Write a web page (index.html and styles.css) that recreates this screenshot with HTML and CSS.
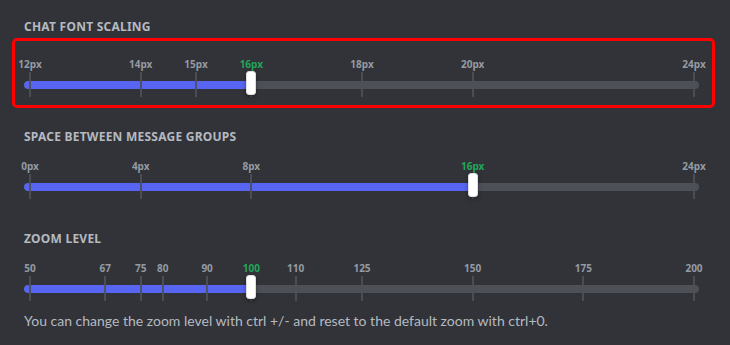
FILE: index.html
```html
<!DOCTYPE html>
<html lang="en">
<head>
<meta charset="utf-8">
<title>Appearance</title>
<link rel="stylesheet" href="styles.css">
</head>
<body>
<main class="page">
  <section class="group group-first">
    <h2 class="title">Chat Font Scaling</h2>
    <div class="slider">
      <div class="track"><div class="fill" style="width:227.3px"></div></div>
      <div class="mark" style="left:6px"><span class="label">12px</span><span class="tick"></span></div>
      <div class="mark" style="left:116.7px"><span class="label">14px</span><span class="tick"></span></div>
      <div class="mark" style="left:172px"><span class="label">15px</span><span class="tick"></span></div>
      <div class="mark" style="left:227.3px"><span class="label active">16px</span><span class="tick"></span></div>
      <div class="mark" style="left:338px"><span class="label">18px</span><span class="tick"></span></div>
      <div class="mark" style="left:448.7px"><span class="label">20px</span><span class="tick"></span></div>
      <div class="mark" style="left:670px"><span class="label">24px</span><span class="tick"></span></div>
      <div class="handle" style="left:227.3px"></div>
      <div class="highlight"></div>
    </div>
  </section>

  <section class="group">
    <h2 class="title">Space Between Message Groups</h2>
    <div class="slider">
      <div class="track"><div class="fill" style="width:448.7px"></div></div>
      <div class="mark" style="left:6px"><span class="label">0px</span><span class="tick"></span></div>
      <div class="mark" style="left:116.7px"><span class="label">4px</span><span class="tick"></span></div>
      <div class="mark" style="left:227.3px"><span class="label">8px</span><span class="tick"></span></div>
      <div class="mark" style="left:448.7px"><span class="label active">16px</span><span class="tick"></span></div>
      <div class="mark" style="left:670px"><span class="label">24px</span><span class="tick"></span></div>
      <div class="handle" style="left:448.7px"></div>
    </div>
  </section>

  <section class="group">
    <h2 class="title">Zoom Level</h2>
    <div class="slider">
      <div class="track"><div class="fill" style="width:227.3px"></div></div>
      <div class="mark" style="left:6px"><span class="label">50</span><span class="tick"></span></div>
      <div class="mark" style="left:81.3px"><span class="label">67</span><span class="tick"></span></div>
      <div class="mark" style="left:116.7px"><span class="label">75</span><span class="tick"></span></div>
      <div class="mark" style="left:138.8px"><span class="label">80</span><span class="tick"></span></div>
      <div class="mark" style="left:183.1px"><span class="label">90</span><span class="tick"></span></div>
      <div class="mark" style="left:227.3px"><span class="label active">100</span><span class="tick"></span></div>
      <div class="mark" style="left:271.6px"><span class="label">110</span><span class="tick"></span></div>
      <div class="mark" style="left:338px"><span class="label">125</span><span class="tick"></span></div>
      <div class="mark" style="left:448.7px"><span class="label">150</span><span class="tick"></span></div>
      <div class="mark" style="left:559.3px"><span class="label">175</span><span class="tick"></span></div>
      <div class="mark" style="left:670px"><span class="label">200</span><span class="tick"></span></div>
      <div class="handle" style="left:227.3px"></div>
    </div>
    <p class="note">You can change the zoom level with ctrl +/- and reset to the default zoom with ctrl+0.</p>
  </section>
</main>
</body>
</html>
```

FILE: styles.css
```css
html, body {
  margin: 0;
  padding: 0;
  background: #313338;
  height: 100%;
  overflow: hidden;
}

body {
  font-family: "Noto Sans", "Open Sans", "Liberation Sans", sans-serif;
  color: #dbdee1;
}

.page {
  display: flex;
  flex-direction: column;
  gap: 31px;
  padding: 19px 0 0 24px;
}

.group {
  display: flex;
  flex-direction: column;
  gap: 15px;
}

.group-first {
  gap: 23px;
}

.title {
  margin: 0;
  font-size: 12px;
  line-height: 16px;
  font-weight: 700;
  text-transform: uppercase;
  letter-spacing: 0.02em;
  color: #b5bac1;
}

.slider {
  position: relative;
  width: 675px;
  height: 40px;
}

.track {
  position: absolute;
  left: 0;
  right: 0;
  top: 23px;
  height: 8px;
  border-radius: 4px;
  background: #4e5058;
  overflow: hidden;
}

.fill {
  height: 100%;
  background: #5865f2;
  border-radius: 4px 0 0 4px;
}

.mark {
  position: absolute;
  top: 0;
  width: 0;
  display: flex;
  flex-direction: column;
  align-items: center;
}

.label {
  font-size: 10px;
  line-height: 12px;
  font-weight: 700;
  color: #949ba4;
  white-space: nowrap;
}

.label.active {
  color: #23a55a;
}

.tick {
  margin-top: 2px;
  width: 2px;
  height: 25px;
  background: #4e5058;
  opacity: 0.9;
}

.handle {
  position: absolute;
  top: 13px;
  width: 10px;
  height: 24px;
  transform: translateX(-50%);
  background: #ffffff;
  border: 1px solid #dcdde0;
  box-sizing: border-box;
  border-radius: 3px;
  box-shadow: 0 2px 4px rgba(0, 0, 0, 0.35);
}

.highlight {
  position: absolute;
  left: -12px;
  top: -20px;
  right: -16px;
  bottom: -10px;
  border: 3px solid #fe0000;
  border-radius: 5px;
  pointer-events: none;
}

.note {
  margin: -5px 0 0;
  font-family: Lato, "Noto Sans", sans-serif;
  font-size: 14px;
  line-height: 18px;
  color: #b5bac1;
}
```
